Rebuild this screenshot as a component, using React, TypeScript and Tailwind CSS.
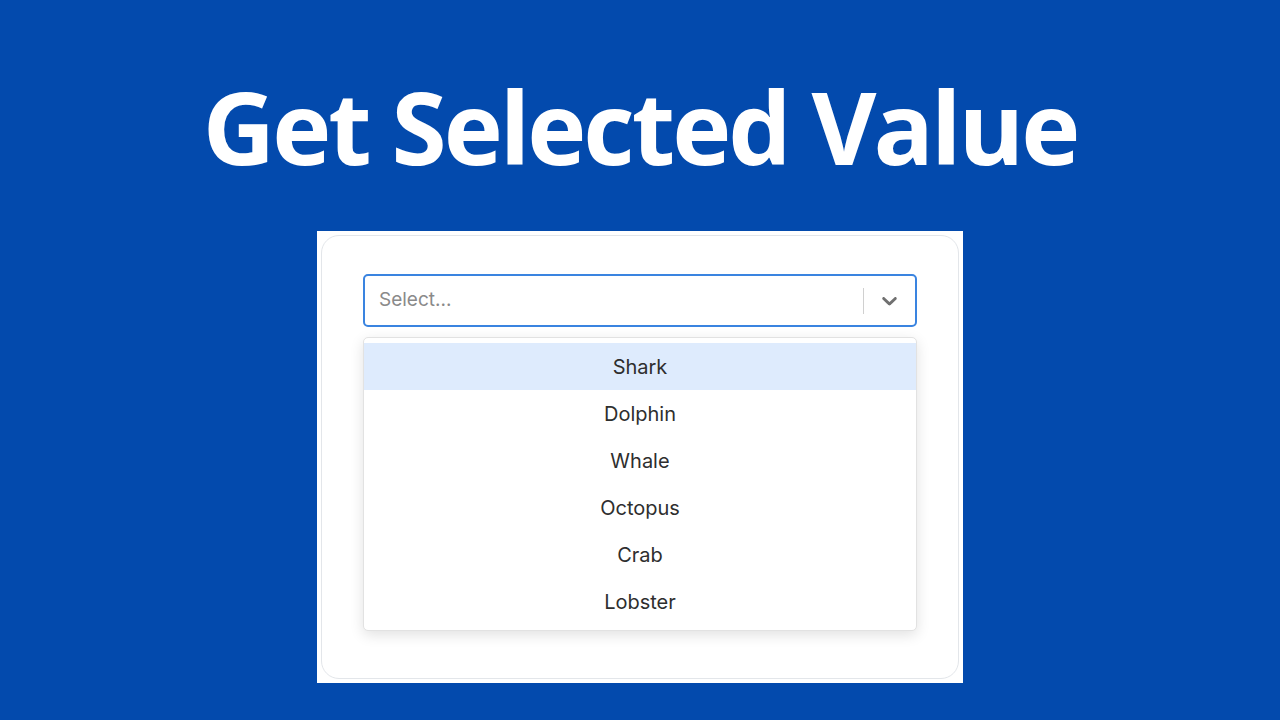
const animals = ["Shark", "Dolphin", "Whale", "Octopus", "Crab", "Lobster"];

export default function App() {
  return (
    <div className="w-[1280px] h-[720px] bg-[#034aad] flex flex-col items-center overflow-hidden font-['Inter',sans-serif]">
      <h1 className="mt-[66px] text-white font-bold text-[100px] leading-[120px] tracking-[-3px] font-['Open_Sans',sans-serif]">
        Get Selected Value
      </h1>
      <div className="mt-[45px] w-[646px] h-[452px] bg-white p-[4px]">
        <div className="h-full rounded-[18px] border border-[#e3e6ea] px-[41px] pt-[38px]">
          <div className="h-[53px] rounded-[5px] border-2 border-[#3a84e0] flex items-center">
            <span className="flex-1 pl-[14px] text-[19px] text-[#8a8a8a]">Select...</span>
            <span className="w-px h-[26px] bg-[#d0d0d0]" />
            <span className="w-[51px] flex justify-center text-[#707070]">
              <svg width="25" height="25" viewBox="0 0 20 20" fill="currentColor">
                <path d="M4.516 7.548c0.436-0.446 1.043-0.481 1.576 0l3.908 3.747 3.908-3.747c0.533-0.481 1.141-0.446 1.574 0 0.436 0.445 0.408 1.197 0 1.615-0.406 0.418-4.695 4.502-4.695 4.502-0.217 0.223-0.502 0.335-0.787 0.335s-0.57-0.112-0.789-0.335c0 0-4.287-4.084-4.695-4.502s-0.436-1.170 0-1.615z" />
              </svg>
            </span>
          </div>
          <div className="mt-[10px] rounded-[5px] border border-[#e2e2e2] bg-white py-[5px] shadow-[0_4px_14px_rgba(0,0,0,0.12)]">
            {animals.map((a, i) => (
              <div
                key={a}
                className={`h-[47px] flex items-center justify-center text-[20px] text-[#2e2e2e] ${i === 0 ? "bg-[#deebfd]" : ""}`}
              >
                {a}
              </div>
            ))}
          </div>
        </div>
      </div>
    </div>
  );
}
